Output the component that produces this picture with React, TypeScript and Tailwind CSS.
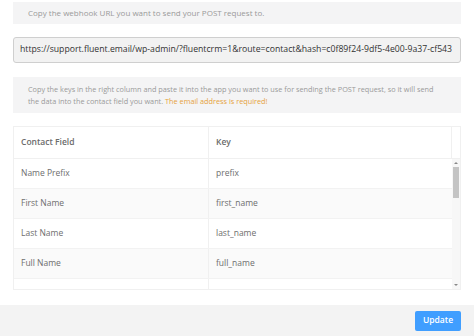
import React from "react";

const rows = [
  ["Name Prefix", "prefix"],
  ["First Name", "first_name"],
  ["Last Name", "last_name"],
  ["Full Name", "full_name"],
  ["", ""],
];

export default function App() {
  return (
    <div
      className="w-[474px] h-[336px] bg-white flex flex-col overflow-hidden"
      style={{ fontFamily: '"Open Sans", "Noto Sans", sans-serif' }}
    >
      <div className="px-[13px] flex flex-col">
        <div className="mt-[2px] h-[22px] bg-[#f4f4f5] flex items-center pl-[15px] text-[8px] text-[#9a9a9a]">
          Copy the webhook URL you want to send your POST request to.
        </div>
        <div className="mt-[13px] h-[26px] bg-[#f2f2f2] border border-[#cfcfcf] rounded-[3px] flex items-center pl-[6px] text-[8.7px] text-[#333] whitespace-nowrap overflow-hidden">
          https://support.fluent.email/wp-admin/?fluentcrm=1&amp;route=contact&amp;hash=c0f89f24-9df5-4e00-9a37-cf543
        </div>
        <div className="mt-[14px] h-[36px] bg-[#f4f4f5] flex items-center pl-[15px] pr-[6px] text-[7.3px] leading-[12.5px] text-[#9a9a9a]">
          <p className="whitespace-nowrap">
            Copy the keys in the right column and paste it into the app you want to use for sending the POST request, so it will send
            <br />
            the data into the contact field you want.{" "}
            <span className="text-[#e6a23c]">The email address is required!</span>
          </p>
        </div>
        <div className="mt-[13px] border border-[#f0f0f0] flex flex-col text-[8.5px] text-[#6e6e6e]">
          <div className="flex h-[32px] border-b border-[#f0f0f0]">
            <div className="w-[195px] border-r border-[#f0f0f0] flex items-center pl-[7px] font-semibold text-[#6b6b6b]">
              Contact Field
            </div>
            <div className="flex-1 border-r border-[#f0f0f0] flex items-center pl-[7px] font-semibold text-[#6b6b6b]">
              Key
            </div>
            <div className="w-[8px]" />
          </div>
          <div className="flex h-[130px]">
            <div className="flex-1 overflow-hidden">
              {rows.map(([a, b], i) => (
                <div
                  key={i}
                  className={`flex h-[30px] border-b border-[#f2f2f2] ${i % 2 === 1 ? "bg-[#fafafa]" : "bg-white"}`}
                >
                  <div className="w-[195px] border-r border-[#f0f0f0] flex items-center pl-[7px]">{a}</div>
                  <div className="flex-1 flex items-center pl-[7px]">{b}</div>
                </div>
              ))}
            </div>
            <div className="w-[8px] bg-[#f7f7f7] flex flex-col items-center">
              <div className="h-[8px] flex items-center justify-center">
                <div className="w-0 h-0 border-l-[2px] border-r-[2px] border-b-[2px] border-l-transparent border-r-transparent border-b-[#888]" />
              </div>
              <div className="w-[6px] h-[31px] bg-[#c4c4c4]" />
              <div className="flex-1" />
              <div className="h-[8px] flex items-center justify-center">
                <div className="w-0 h-0 border-l-[2px] border-r-[2px] border-t-[2px] border-l-transparent border-r-transparent border-t-[#888]" />
              </div>
            </div>
          </div>
        </div>
      </div>
      <div className="mt-auto h-[31px] bg-[#f3f3f3] flex items-center justify-end pr-[13px]">
        <button className="w-[46px] h-[20px] bg-[#409eff] rounded-[2px] text-white text-[8.5px] font-semibold">
          Update
        </button>
      </div>
    </div>
  );
}
